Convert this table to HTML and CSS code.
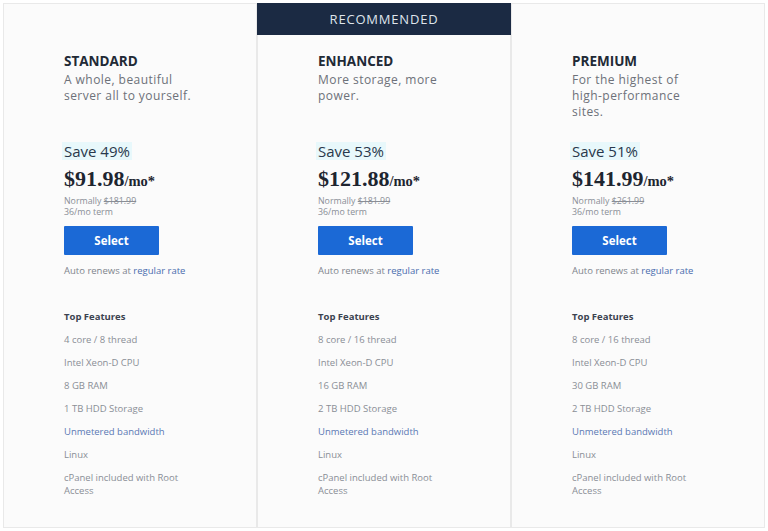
FILE: index.html
```html
<!DOCTYPE html>
<html>
<head>
<meta charset="utf-8">
<link rel="stylesheet" href="styles.css">
</head>
<body>
<div class="plans">
  <div class="card">
    <div class="ribbon ribbon-empty"></div>
    <div class="body">
      <h2 class="name">STANDARD</h2>
      <p class="desc">A whole, beautiful<br>server all to yourself.</p>
      <div class="save"><span>Save 49%</span></div>
      <div class="price">$91.98<span class="per">/mo*</span></div>
      <div class="normal">Normally <s>$181.99</s></div>
      <div class="term">36/mo term</div>
      <button class="select">Select</button>
      <div class="renew">Auto renews at <span class="link">regular rate</span></div>
      <div class="feat-title">Top Features</div>
      <ul class="features">
        <li>4 core / 8 thread</li>
        <li>Intel Xeon-D CPU</li>
        <li>8 GB RAM</li>
        <li>1 TB HDD Storage</li>
        <li class="link">Unmetered bandwidth</li>
        <li>Linux</li>
        <li>cPanel included with Root<br>Access</li>
      </ul>
    </div>
  </div>
  <div class="card">
    <div class="ribbon">RECOMMENDED</div>
    <div class="body">
      <h2 class="name">ENHANCED</h2>
      <p class="desc">More storage, more<br>power.</p>
      <div class="save"><span>Save 53%</span></div>
      <div class="price">$121.88<span class="per">/mo*</span></div>
      <div class="normal">Normally <s>$181.99</s></div>
      <div class="term">36/mo term</div>
      <button class="select">Select</button>
      <div class="renew">Auto renews at <span class="link">regular rate</span></div>
      <div class="feat-title">Top Features</div>
      <ul class="features">
        <li>8 core / 16 thread</li>
        <li>Intel Xeon-D CPU</li>
        <li>16 GB RAM</li>
        <li>2 TB HDD Storage</li>
        <li class="link">Unmetered bandwidth</li>
        <li>Linux</li>
        <li>cPanel included with Root<br>Access</li>
      </ul>
    </div>
  </div>
  <div class="card">
    <div class="ribbon ribbon-empty"></div>
    <div class="body">
      <h2 class="name">PREMIUM</h2>
      <p class="desc">For the highest of<br>high-performance<br>sites.</p>
      <div class="save"><span>Save 51%</span></div>
      <div class="price">$141.99<span class="per">/mo*</span></div>
      <div class="normal">Normally <s>$261.99</s></div>
      <div class="term">36/mo term</div>
      <button class="select">Select</button>
      <div class="renew">Auto renews at <span class="link">regular rate</span></div>
      <div class="feat-title">Top Features</div>
      <ul class="features">
        <li>8 core / 16 thread</li>
        <li>Intel Xeon-D CPU</li>
        <li>30 GB RAM</li>
        <li>2 TB HDD Storage</li>
        <li class="link">Unmetered bandwidth</li>
        <li>Linux</li>
        <li>cPanel included with Root<br>Access</li>
      </ul>
    </div>
  </div>
</div>
</body>
</html>
```

FILE: styles.css
```css
* { box-sizing: border-box; }
html, body { margin: 0; padding: 0; background: #ffffff; }
body { font-family: "Open Sans", "DejaVu Sans", sans-serif; }

.plans {
  margin: 3px 0 0 3px;
  width: 762px;
  height: 525px;
  display: grid;
  grid-template-columns: 254px 254px 254px;
}

.card {
  background: #fbfbfb;
  border: 1px solid #e9e9e9;
  display: flex;
  flex-direction: column;
}

.ribbon {
  height: 32px;
  background: #1b2a43;
  color: #dfe4ec;
  font-size: 13px;
  letter-spacing: 0.8px;
  display: flex;
  align-items: center;
  justify-content: center;
  margin: -1px -1px 0 -1px;
}
.ribbon-empty { background: transparent; }

.body {
  padding: 17px 0 0 60px;
  display: flex;
  flex-direction: column;
  align-items: flex-start;
}

.name {
  margin: 0;
  font-size: 13.5px;
  font-weight: 700;
  color: #222a36;
  line-height: 18px;
}

.desc {
  margin: 2px 0 0 0;
  font-size: 12px;
  letter-spacing: 0.45px;
  line-height: 16px;
  color: #6d7179;
  height: 68px;
}

.save span {
  display: inline-block;
  background: #e8f8fb;
  color: #29384c;
  font-size: 15px;
  font-weight: 500;
  line-height: 18px;
  padding: 0 2px;
  margin-left: -2px;
}

.price {
  margin-top: 4px;
  font-family: "Liberation Serif", serif;
  font-weight: 700;
  font-size: 22px;
  line-height: 26px;
  color: #1e2530;
}
.per { font-size: 14.5px; }

.normal, .term {
  font-size: 8.8px;
  line-height: 11px;
  color: #8a8e96;
}
.normal { margin-top: 2px; }

.select {
  margin-top: 8px;
  width: 95px;
  height: 29px;
  border: none;
  border-radius: 1px;
  background: #1b69d6;
  color: #ffffff;
  font-family: inherit;
  font-size: 11.5px;
  font-weight: 700;
  padding: 0;
}

.renew {
  margin-top: 10px;
  font-size: 9.5px;
  line-height: 12px;
  color: #80858d;
}
.link { color: #4a6cae; }

.feat-title {
  margin-top: 34px;
  font-size: 9.5px;
  font-weight: 700;
  color: #3b4350;
  line-height: 12px;
}

.features {
  list-style: none;
  margin: 10px 0 0 0;
  padding: 0;
  font-size: 9.5px;
  line-height: 13px;
  color: #8a8e96;
}
.features li { margin-bottom: 10px; }
.features li.link { color: #5a78b4; }
```
